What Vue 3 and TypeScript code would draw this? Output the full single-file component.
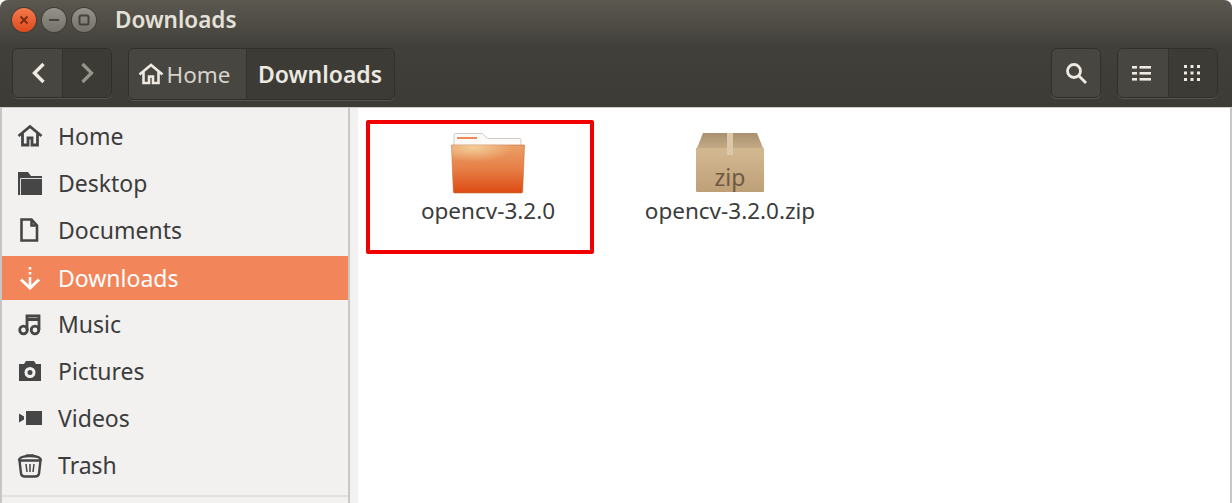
<script setup lang="ts">
interface Place { name: string; icon: string; active?: boolean }
const places: Place[] = [
  { name: 'Home', icon: 'home' },
  { name: 'Desktop', icon: 'desktop' },
  { name: 'Documents', icon: 'doc' },
  { name: 'Downloads', icon: 'down', active: true },
  { name: 'Music', icon: 'music' },
  { name: 'Pictures', icon: 'camera' },
  { name: 'Videos', icon: 'video' },
  { name: 'Trash', icon: 'trash' },
]
</script>

<template>
  <div class="window">
    <header class="titlebar">
      <div class="wm">
        <span class="wm-btn close">
          <svg width="12" height="12" viewBox="0 0 12 12"><path d="M2.5 2.5l7 7M9.5 2.5l-7 7" stroke="#7a2a12" stroke-width="1.8" fill="none" /></svg>
        </span>
        <span class="wm-btn">
          <svg width="12" height="12" viewBox="0 0 12 12"><path d="M1 6h10" stroke="#45433d" stroke-width="2" fill="none" /></svg>
        </span>
        <span class="wm-btn">
          <svg width="12" height="12" viewBox="0 0 12 12"><rect x="1.5" y="1.5" width="9" height="9" rx="1.5" stroke="#45433d" stroke-width="2" fill="none" /></svg>
        </span>
      </div>
      <span class="title">Downloads</span>
    </header>

    <div class="toolbar">
      <div class="group nav">
        <button class="tbtn nav-b">
          <svg width="18" height="24" viewBox="0 0 18 24"><path d="M14.500 3L5.500 12l9 9" stroke="#eeeae2" stroke-width="3.400" fill="none" /></svg>
        </button>
        <button class="tbtn nav-b sunk">
          <svg width="18" height="24" viewBox="0 0 18 24"><path d="M4.500 3l9 9-9 9" stroke="#97948c" stroke-width="3.200" fill="none" /></svg>
        </button>
      </div>

      <div class="group crumbs">
        <button class="tbtn crumb-home">
          <svg width="26" height="22" viewBox="0 0 26 22"><path d="M1.500 11.500L13 2l11.500 9.500M5.500 9v11h5.500v-6.500h4V20h5.500V9" stroke="#eeeae2" stroke-width="2.600" fill="none" /></svg>
          <span>Home</span>
        </button>
        <button class="tbtn crumb-cur sunk">Downloads</button>
      </div>

      <div class="spacer"></div>

      <button class="group tbtn search">
        <svg width="24" height="24" viewBox="0 0 24 24"><circle cx="10" cy="10" r="6.500" stroke="#eeeae2" stroke-width="2.800" fill="none" /><path d="M15 15l7 7" stroke="#eeeae2" stroke-width="2.800" fill="none" /></svg>
      </button>

      <div class="group views">
        <button class="tbtn view-b list-b">
          <svg width="19" height="17" viewBox="0 0 19 17"><g fill="#eeeae2"><rect x="0" y="1" width="5" height="2.600" /><rect x="7.500" y="1" width="11.500" height="2.600" /><rect x="0" y="7" width="5" height="2.600" /><rect x="7.500" y="7" width="11.500" height="2.600" /><rect x="0" y="13" width="5" height="2.600" /><rect x="7.500" y="13" width="11.500" height="2.600" /></g></svg>
        </button>
        <button class="tbtn view-b sunk">
          <svg width="18" height="18" viewBox="0 0 18 18"><g fill="#eeeae2"><rect x="1" y="1" width="3" height="3" /><rect x="7.500" y="1" width="3" height="3" /><rect x="14" y="1" width="3" height="3" /><rect x="1" y="7.500" width="3" height="3" /><rect x="7.500" y="7.500" width="3" height="3" /><rect x="14" y="7.500" width="3" height="3" /><rect x="1" y="14" width="3" height="3" /><rect x="7.500" y="14" width="3" height="3" /><rect x="14" y="14" width="3" height="3" /></g></svg>
        </button>
      </div>
    </div>

    <div class="main">
      <aside class="sidebar">
        <ul class="places">
          <li v-for="p in places" :key="p.name" class="place" :class="{ active: p.active }">
            <span class="pi">
              <svg v-if="p.icon === 'home'" width="26" height="24" viewBox="0 0 26 24"><path d="M1.500 12L13 2.500 24.500 12M5.500 9.500V21h5.500v-7h4v7h5.500V9.500" stroke="#464646" stroke-width="2.800" fill="none" /></svg>
              <svg v-else-if="p.icon === 'desktop'" width="26" height="24" viewBox="0 0 26 24"><path d="M1 1h10l3 4h11v19H1z" fill="#464646" /><path d="M3.500 24V7.500H25" stroke="#dcdcdc" stroke-width="1" fill="none" /></svg>
              <svg v-else-if="p.icon === 'doc'" width="26" height="24" viewBox="0 0 26 24"><path d="M4.500 1.500h10l5.500 6v15H4.500zM14.500 1.500v6H20" stroke="#464646" stroke-width="2.600" fill="none" /></svg>
              <svg v-else-if="p.icon === 'down'" width="26" height="24" viewBox="0 0 26 24"><path d="M13 1v2.500M13 6v2.500M13 11v9" stroke="#fff" stroke-width="2.600" fill="none" /><path d="M4 13.500L13 22l9-8.500" stroke="#fff" stroke-width="3" fill="none" /></svg>
              <svg v-else-if="p.icon === 'music'" width="26" height="24" viewBox="0 0 26 24"><g stroke="#464646" stroke-width="2.800" fill="none"><circle cx="6.500" cy="18" r="3.800" /><circle cx="18" cy="18" r="3.800" /><path d="M10 18V4h12v14M10 7.500h12" /></g></svg>
              <svg v-else-if="p.icon === 'camera'" width="26" height="24" viewBox="0 0 26 24"><path fill-rule="evenodd" d="M2 5h5l2-3h8l2 3h5v17H2zM13 8a5.500 5.500 0 1 0 0 11 5.500 5.500 0 0 0 0-11zM13 11a2.500 2.500 0 1 1 0 5 2.500 2.500 0 0 1 0-5z" fill="#464646" /></svg>
              <svg v-else-if="p.icon === 'video'" width="26" height="24" viewBox="0 0 26 24"><path d="M9 5h16v14H9z" fill="#464646" /><path d="M2 7.500l5 3v3l-5 3z" fill="#464646" /></svg>
              <svg v-else width="26" height="26" viewBox="0 0 26 26"><g stroke="#464646" fill="none"><path d="M2 8.500c0-3 5-4.500 11-4.500s11 1.500 11 4.500" stroke-width="2.400" /><path d="M9 3.500h8" stroke-width="2.400" /><path d="M2.500 8.500h21l-1.500 13c-.3 2-2 3-4 3H8c-2 0-3.700-1-4-3z" stroke-width="2.400" /><path d="M9 12l1 8M13 12v8M17 12l-1 8" stroke-width="1.500" /></g></svg>
            </span>
            <span class="pn">{{ p.name }}</span>
          </li>
        </ul>
      </aside>
      <div class="gutter"></div>
      <section class="files">
        <figure class="file marked">
          <svg class="thumb" width="74" height="62" viewBox="0 0 74 62">
            <defs>
              <linearGradient id="fg" x1="0" y1="0" x2="0" y2="1">
                <stop offset="0" stop-color="#eb9f68" />
                <stop offset="0.5" stop-color="#e67f46" />
                <stop offset="1" stop-color="#dc4a12" />
              </linearGradient>
              <radialGradient id="fh" cx="0.3" cy="0.1" r="0.55">
                <stop offset="0" stop-color="#f4d4a0" stop-opacity="0.85" />
                <stop offset="1" stop-color="#f4d4a0" stop-opacity="0" />
              </radialGradient>
            </defs>
            <path d="M3 16V3q0-1.500 1.500-1.500h27l5 5h32q1.500 0 1.500 1.500v8z" fill="#fbfaf8" stroke="#cfccc6" />
            <rect x="6" y="5" width="20" height="2" fill="#ee8a55" />
            <path d="M.5 13h73l-1.800 46.500a1.500 1.500 0 0 1-1.500 1.500H3.800a1.500 1.500 0 0 1-1.500-1.500z" fill="url(#fg)" stroke="#c0703e" stroke-width="0.600" />
            <path d="M.5 13h73l-1 26H1.500z" fill="url(#fh)" />
          </svg>
          <figcaption>opencv-3.2.0</figcaption>
        </figure>
        <figure class="file">
          <svg class="thumb" width="70" height="62" viewBox="0 0 70 62">
            <defs>
              <linearGradient id="bx" x1="0" y1="0" x2="0" y2="1">
                <stop offset="0" stop-color="#d3b992" />
                <stop offset="1" stop-color="#bea078" />
              </linearGradient>
              <linearGradient id="lid" x1="0" y1="0" x2="0" y2="1">
                <stop offset="0" stop-color="#a89070" />
                <stop offset="1" stop-color="#c4aa84" />
              </linearGradient>
            </defs>
            <path d="M8 1h54l6 15H2z" fill="url(#lid)" />
            <path d="M1 16h68v43q0 1-1 1H2q-1 0-1-1z" fill="url(#bx)" />
            <rect x="32" y="1" width="6" height="22" fill="#dcc8a9" />
            <text x="35" y="54" class="zip" text-anchor="middle">zip</text>
          </svg>
          <figcaption>opencv-3.2.0.zip</figcaption>
        </figure>
      </section>
    </div>
  </div>
</template>

<style>
html, body { margin: 0; background: #fff; }
</style>

<style scoped>
.window {
  width: 1232px;
  height: 503px;
  display: flex;
  flex-direction: column;
  overflow: hidden;
  font-family: "Noto Sans", "Open Sans", sans-serif;
  background: #d4d2ce;
  border-radius: 8px 8px 0 0;
}
.titlebar {
  height: 44px;
  flex: none;
  display: flex;
  align-items: center;
  gap: 19px;
  padding-left: 12px;
  padding-bottom: 4px;
  box-sizing: border-box;
  background: linear-gradient(#5b5850, #44423c);
}
.wm { display: flex; gap: 6px; }
.wm-btn {
  width: 24px;
  height: 24px;
  border-radius: 50%;
  display: flex;
  align-items: center;
  justify-content: center;
  background: linear-gradient(#95928b, #75726b);
  box-shadow: 0 0 0 1px #3f3d38;
}
.close { background: linear-gradient(#f47a4c, #df4a1c); }
.title {
  color: #e4e1d9;
  font-size: 22.500px;
  font-weight: 600;
  line-height: 24px;
}
.toolbar {
  height: 63px;
  flex: none;
  box-sizing: border-box;
  display: flex;
  align-items: flex-start;
  padding: 4px 14px 0 12px;
  background: linear-gradient(#42403a, #3c3b36);
  gap: 16px;
}
.spacer { flex: 1; margin-right: -1px; }
.tbtn {
  background: #484640;
  border: none;
  padding: 0;
  margin: 0;
  color: #d6d3cb;
  font-family: inherit;
  display: flex;
  align-items: center;
  justify-content: center;
}
.group {
  display: flex;
  height: 50px;
  box-sizing: border-box;
  border: 1px solid #302f2b;
  border-radius: 6px;
  overflow: hidden;
  box-shadow: 0 1px 0 #56544d;
}
.sunk { background: #3c3b36; box-shadow: inset 1px 0 0 #33322e; }
.nav { width: 100px; }
.nav-b { width: 50%; }
.crumbs { width: 267px; height: 52px; }
.crumb-home {
  width: 117px;
  font-size: 22.500px;
  gap: 2px;
  padding-right: 6px;
}
.crumb-cur {
  flex: 1;
  color: #ece9e1;
  font-size: 23px;
  font-weight: 600;
}
.search { width: 50px; }
.views { width: 101px; }
.view-b { width: 50%; }
.list-b { padding-right: 3px; }
.main {
  flex: 1;
  display: flex;
  min-height: 0;
  border-top: 1px solid #cfcdc8;
}
.sidebar {
  width: 348px;
  box-sizing: border-box;
  flex: none;
  background: #f2f1f0;
  border-left: 2px solid #c8c6c2;
}
.places {
  list-style: none;
  margin: 0;
  padding: 5px 0 0;
  height: 389px;
  box-sizing: border-box;
  border-bottom: 2px solid #e2e1df;
}
.place {
  height: 46.950px;
  display: flex;
  align-items: center;
  gap: 15px;
  padding-left: 14px;
  color: #3c3c3c;
  font-size: 23px;
  box-sizing: border-box;
}
.place.active {
  background: #f2855a;
  color: #fff;
  height: 44px;
  margin: 2px 0 0.900px;
}
.pi { width: 27px; height: 26px; display: flex; align-items: center; justify-content: center; }
.gutter {
  width: 10px;
  flex: none;
  box-sizing: border-box;
  background: #f2f1f0;
  border-left: 2px solid #c8c8c6;
}
.files {
  flex: 1;
  background: #fff;
  display: flex;
  align-items: flex-start;
  gap: 22px;
  padding: 12px 0 0 8px;
  border-right: 2px solid #c8c6c2;
}
.file {
  width: 228px;
  height: 134px;
  box-sizing: border-box;
  border: 4px solid transparent;
  border-radius: 2px;
  margin: 0;
  padding-top: 8px;
  display: flex;
  flex-direction: column;
  align-items: center;
}
.marked { border-color: #f00000; padding-left: 16px; }
.thumb { display: block; }
figcaption {
  margin-top: 2px;
  color: #3c3c3c;
  font-size: 22.500px;
  line-height: 30px;
  white-space: nowrap;
}
.zip {
  font-family: "Noto Sans", sans-serif;
  font-size: 23px;
  fill: #6e5a42;
}
</style>
